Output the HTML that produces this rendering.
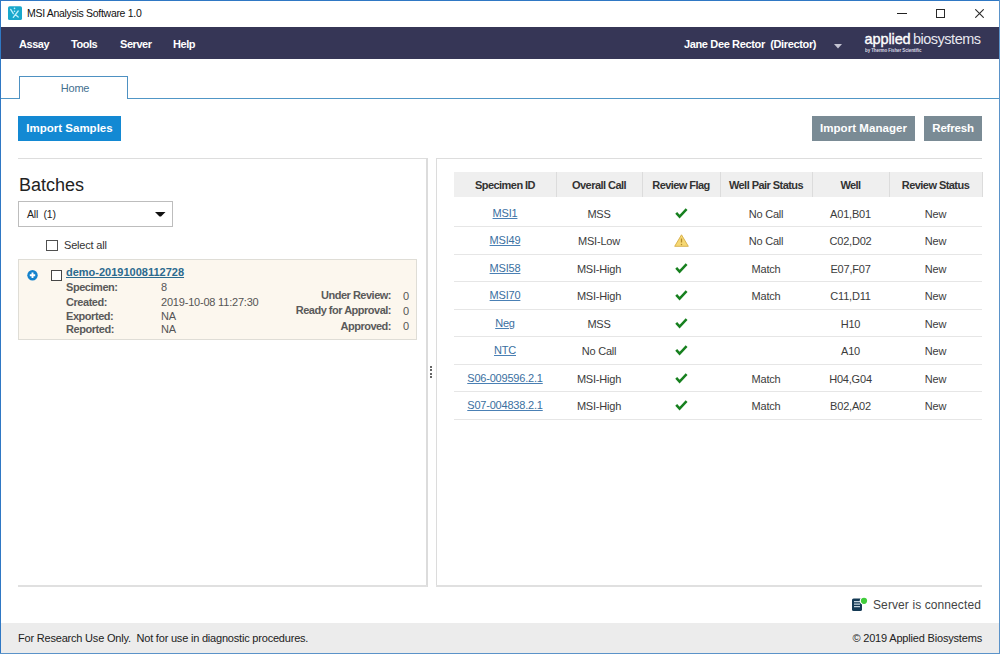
<!DOCTYPE html>
<html><head><meta charset="utf-8">
<style>
*{box-sizing:border-box;margin:0;padding:0}
html,body{width:1000px;height:654px;overflow:hidden;background:#fff;font-family:"Liberation Sans",sans-serif;color:#333}
.abs{position:absolute}
svg{display:block}
#win{position:absolute;left:0;top:0;width:1000px;height:654px;background:#fff}
.bl{position:absolute;background:#2b76c4}
#title{position:absolute;left:27px;top:7px;font-size:10.5px;color:#111;letter-spacing:-0.3px;white-space:nowrap}
#menubar{position:absolute;left:1px;top:27px;width:998px;height:32px;background:#363656}
.mi{position:absolute;top:11px;color:#fff;font-weight:bold;font-size:11px;letter-spacing:-0.45px;white-space:nowrap}
.tabline{position:absolute;left:1px;top:98px;width:998px;height:1px;background:#5096c6}
#tab{position:absolute;left:19px;top:76px;width:109px;height:23px;border:1px solid #4e91c2;border-bottom:none;background:#fff}
#tab span{position:absolute;left:3px;right:0;top:5px;text-align:center;font-size:11px;letter-spacing:-0.25px;color:#44708f}
.btn{position:absolute;top:116px;height:25px;color:#fff;font-weight:bold;font-size:11.5px;text-align:center;line-height:25px;letter-spacing:-0.2px;white-space:nowrap}
.t{position:absolute;white-space:nowrap;font-size:11px;letter-spacing:-0.2px}
.b{font-weight:bold;letter-spacing:-0.45px}
.hd{position:absolute;top:172px;height:25px;font-weight:bold;font-size:11px;letter-spacing:-0.55px;color:#333;text-align:center;line-height:26px}
.rl{position:absolute;left:454px;width:528px;height:1px;background:#e6e6e6}
.c{position:absolute;text-align:center;font-size:11px;letter-spacing:-0.2px;color:#3c3c3c;white-space:nowrap}
.lnk{color:#3a6f9f;text-decoration:underline;text-decoration-color:#4a80b5;text-underline-offset:1px}
</style></head><body>
<div id="win">
  <!-- window border -->
  <div class="bl" style="left:0;top:0;width:1000px;height:1px;background:#2f78c4"></div>
  <div class="bl" style="left:0;top:0;width:1px;height:654px;background:#2f78c4"></div>
  <div class="bl" style="left:999px;top:0;width:1px;height:654px;background:#5b93c9"></div>
  <div class="bl" style="left:0;top:653px;width:1000px;height:1px;background:#5b93c9"></div>

  <!-- title bar -->
  <svg class="abs" style="left:8px;top:6px" width="14" height="14" viewBox="0 0 14 14">
    <rect x="0" y="0.3" width="14" height="13.7" rx="1.6" fill="#18a8cc"/>
    <path d="M2.7 3.4 L5.3 7.6 M10.2 5 L5.3 11.4 M7.2 8.6 L10.2 11.1" stroke="#bff0fb" stroke-width="1.3" stroke-linecap="round" fill="none"/>
    <circle cx="6.5" cy="2.4" r="0.8" fill="#bff0fb"/><circle cx="6.5" cy="5.3" r="0.8" fill="#bff0fb"/>
  </svg>
  <div id="title">MSI Analysis Software 1.0</div>
  <!-- window controls -->
  <div class="abs" style="left:897px;top:13px;width:9.5px;height:1px;background:#222"></div>
  <div class="abs" style="left:936px;top:9px;width:9px;height:9px;border:1px solid #2a2a2a"></div>
  <svg class="abs" style="left:975px;top:9px" width="9" height="9" viewBox="0 0 9 9"><path d="M0.3 0.3 L8.7 8.7 M8.7 0.3 L0.3 8.7" stroke="#2a2a2a" stroke-width="1.1"/></svg>

  <!-- menu bar -->
  <div id="menubar"></div>
  <div class="mi" style="left:19px;top:38px">Assay</div>
  <div class="mi" style="left:71px;top:38px">Tools</div>
  <div class="mi" style="left:120px;top:38px">Server</div>
  <div class="mi" style="left:173px;top:38px">Help</div>
  <div class="mi" style="left:684px;top:38px;letter-spacing:-0.36px">Jane Dee Rector&nbsp; (Director)</div>
  <svg class="abs" style="left:834px;top:43.5px" width="8" height="5" viewBox="0 0 8 5"><path d="M0 0 L8 0 L4 4.5 Z" fill="#c4c4d2"/></svg>
  <div class="abs" style="left:864.5px;top:30.5px;color:#fff;font-size:14.5px;letter-spacing:-0.1px;white-space:nowrap;-webkit-text-stroke:0.35px #fff">applied</div>
  <div class="abs" style="left:913px;top:31px;color:#e8e8f0;font-size:14.5px;letter-spacing:-0.5px;white-space:nowrap">biosystems</div>
  <div class="abs" style="left:865px;top:48px;color:#d8d8e4;font-size:9px;font-weight:bold;white-space:nowrap;letter-spacing:-0.2px;transform:scale(0.5);transform-origin:0 0">by Thermo Fisher Scientific</div>

  <!-- tabs -->
  <div class="tabline"></div>
  <div id="tab"><span>Home</span></div>

  <!-- buttons -->
  <div class="btn" style="left:18px;width:103px;background:#1389d3;letter-spacing:0">Import Samples</div>
  <div class="btn" style="left:812px;width:103px;background:#7a8b95;letter-spacing:0.05px">Import Manager</div>
  <div class="btn" style="left:924px;width:58px;background:#7a8b95">Refresh</div>

  <!-- left panel -->
  <div class="abs" style="left:18px;top:158px;width:409px;height:1px;background:#dddddd"></div>
  <div class="abs" style="left:426px;top:158px;width:1.5px;height:429px;background:#dcdcdc"></div>
  <div class="abs" style="left:18px;top:585px;width:409px;height:2px;background:#e0e0e0"></div>
  <div class="t" style="left:19px;top:175px;font-size:18px;letter-spacing:0;color:#222">Batches</div>
  <div class="abs" style="left:18px;top:201px;width:155px;height:26px;border:1px solid #bdbdbd;background:#fff"></div>
  <div class="t" style="left:27px;top:208px;color:#222;font-size:10.5px">All&nbsp; (1)</div>
  <svg class="abs" style="left:155px;top:212px" width="11" height="5" viewBox="0 0 11 5"><path d="M0 0 L10.5 0 L6 4.6 L4.5 4.6 Z" fill="#111"/></svg>
  <div class="abs" style="left:46px;top:239.5px;width:11.8px;height:11.5px;border:1px solid #505050;background:#fff"></div>
  <div class="t" style="left:64px;top:239px;color:#333">Select all</div>

  <!-- batch card -->
  <div class="abs" style="left:18px;top:259px;width:399px;height:81px;background:#fcf7ee;border:1px solid #dfddd6"></div>
  <svg class="abs" style="left:27px;top:269.5px" width="11" height="11" viewBox="0 0 11 11"><circle cx="5.5" cy="5.3" r="5.2" fill="#1482cc"/><path d="M5.5 2.6 V8 M2.8 5.3 H8.2" stroke="#fff" stroke-width="1.9"/></svg>
  <div class="abs" style="left:51px;top:269.5px;width:11px;height:11.3px;border:1px solid #474747;background:#fff"></div>
  <div class="t b" style="left:66px;top:266px;color:#2b6a8e;text-decoration:underline;font-size:11px;letter-spacing:0">demo-20191008112728</div>
  <div class="t b" style="left:66px;top:281px;color:#5a5a5a">Specimen:</div>
  <div class="t b" style="left:66px;top:295.5px;color:#5a5a5a">Created:</div>
  <div class="t b" style="left:66px;top:309.5px;color:#5a5a5a">Exported:</div>
  <div class="t b" style="left:66px;top:323px;color:#5a5a5a">Reported:</div>
  <div class="t" style="left:161px;top:281px;color:#555">8</div>
  <div class="t" style="left:161px;top:295.5px;color:#555">2019-10-08 11:27:30</div>
  <div class="t" style="left:161px;top:309.5px;color:#555">NA</div>
  <div class="t" style="left:161px;top:323px;color:#555">NA</div>
  <div class="t b" style="right:609px;top:289px;color:#5a5a5a;letter-spacing:-0.5px;text-align:right">Under Review:</div>
  <div class="t b" style="right:609px;top:304px;color:#5a5a5a;letter-spacing:-0.5px;text-align:right">Ready for Approval:</div>
  <div class="t b" style="right:609px;top:319.5px;color:#5a5a5a;letter-spacing:-0.5px;text-align:right">Approved:</div>
  <div class="t" style="left:403px;top:290px;color:#555">0</div>
  <div class="t" style="left:403px;top:305px;color:#555">0</div>
  <div class="t" style="left:403px;top:320px;color:#555">0</div>

  <!-- splitter dots -->
  <div class="abs" style="left:430px;top:365.7px;width:2.2px;height:2.2px;border-radius:50%;background:#333"></div>
  <div class="abs" style="left:430px;top:369.2px;width:2.2px;height:2.2px;border-radius:50%;background:#333"></div>
  <div class="abs" style="left:430px;top:372.6px;width:2.2px;height:2.2px;border-radius:50%;background:#333"></div>
  <div class="abs" style="left:430px;top:376.1px;width:2.2px;height:2.2px;border-radius:50%;background:#333"></div>

  <!-- right panel -->
  <div class="abs" style="left:436px;top:158px;width:546px;height:1px;background:#dddddd"></div>
  <div class="abs" style="left:435.5px;top:158px;width:1.5px;height:429px;background:#dcdcdc"></div>
  <div class="abs" style="left:436px;top:585px;width:546px;height:2px;background:#e0e0e0"></div>

  <div id="table">
<div class="abs" style="left:454px;top:172px;width:528px;height:25px;background:#efefef"></div>
<div class="abs" style="left:556px;top:172px;width:1px;height:25px;background:#dcdcdc"></div>
<div class="hd" style="left:454px;width:102px">Specimen ID</div>
<div class="abs" style="left:642px;top:172px;width:1px;height:25px;background:#dcdcdc"></div>
<div class="hd" style="left:556px;width:86px">Overall Call</div>
<div class="abs" style="left:720px;top:172px;width:1px;height:25px;background:#dcdcdc"></div>
<div class="hd" style="left:642px;width:78px">Review Flag</div>
<div class="abs" style="left:812px;top:172px;width:1px;height:25px;background:#dcdcdc"></div>
<div class="hd" style="left:720px;width:92px">Well Pair Status</div>
<div class="abs" style="left:889px;top:172px;width:1px;height:25px;background:#dcdcdc"></div>
<div class="hd" style="left:812px;width:77px">Well</div>
<div class="abs" style="left:982px;top:172px;width:1px;height:25px;background:#dcdcdc"></div>
<div class="hd" style="left:889px;width:93px">Review Status</div>
<div class="rl" style="top:226.0px"></div>
<div class="c lnk" style="left:454px;width:102px;top:206.9px">MSI1</div>
<div class="c" style="left:556px;width:86px;top:207.8px">MSS</div>
<div class="abs" style="left:674.5px;top:207.8px;width:13px;height:11px"><svg width="13" height="11" viewBox="0 0 13 11"><path d="M1.2 4.8 L4.6 8.6 L11.6 1.2" stroke="#17801f" stroke-width="2.5" fill="none"/></svg></div>
<div class="c" style="left:720px;width:92px;top:207.8px">No Call</div>
<div class="c" style="left:812px;width:77px;top:207.8px">A01,B01</div>
<div class="c" style="left:889px;width:93px;top:207.8px">New</div>
<div class="rl" style="top:253.5px"></div>
<div class="c lnk" style="left:454px;width:102px;top:234.4px">MSI49</div>
<div class="c" style="left:556px;width:86px;top:235.2px">MSI-Low</div>
<div class="abs" style="left:673.5px;top:233.8px;width:15px;height:13px"><svg width="15" height="13" viewBox="0 0 15 13"><path d="M7.5 0.8 L14.3 12.3 L0.7 12.3 Z" fill="#f6d874" stroke="#d6ad45" stroke-width="0.9" stroke-linejoin="round"/><path d="M7.5 4.5 V8.5" stroke="#b48c2c" stroke-width="1.3"/><circle cx="7.5" cy="10.4" r="0.75" fill="#b48c2c"/></svg></div>
<div class="c" style="left:720px;width:92px;top:235.2px">No Call</div>
<div class="c" style="left:812px;width:77px;top:235.2px">C02,D02</div>
<div class="c" style="left:889px;width:93px;top:235.2px">New</div>
<div class="rl" style="top:281.0px"></div>
<div class="c lnk" style="left:454px;width:102px;top:261.9px">MSI58</div>
<div class="c" style="left:556px;width:86px;top:262.8px">MSI-High</div>
<div class="abs" style="left:674.5px;top:262.8px;width:13px;height:11px"><svg width="13" height="11" viewBox="0 0 13 11"><path d="M1.2 4.8 L4.6 8.6 L11.6 1.2" stroke="#17801f" stroke-width="2.5" fill="none"/></svg></div>
<div class="c" style="left:720px;width:92px;top:262.8px">Match</div>
<div class="c" style="left:812px;width:77px;top:262.8px">E07,F07</div>
<div class="c" style="left:889px;width:93px;top:262.8px">New</div>
<div class="rl" style="top:308.5px"></div>
<div class="c lnk" style="left:454px;width:102px;top:289.4px">MSI70</div>
<div class="c" style="left:556px;width:86px;top:290.2px">MSI-High</div>
<div class="abs" style="left:674.5px;top:290.2px;width:13px;height:11px"><svg width="13" height="11" viewBox="0 0 13 11"><path d="M1.2 4.8 L4.6 8.6 L11.6 1.2" stroke="#17801f" stroke-width="2.5" fill="none"/></svg></div>
<div class="c" style="left:720px;width:92px;top:290.2px">Match</div>
<div class="c" style="left:812px;width:77px;top:290.2px">C11,D11</div>
<div class="c" style="left:889px;width:93px;top:290.2px">New</div>
<div class="rl" style="top:336.0px"></div>
<div class="c lnk" style="left:454px;width:102px;top:316.9px">Neg</div>
<div class="c" style="left:556px;width:86px;top:317.8px">MSS</div>
<div class="abs" style="left:674.5px;top:317.8px;width:13px;height:11px"><svg width="13" height="11" viewBox="0 0 13 11"><path d="M1.2 4.8 L4.6 8.6 L11.6 1.2" stroke="#17801f" stroke-width="2.5" fill="none"/></svg></div>
<div class="c" style="left:812px;width:77px;top:317.8px">H10</div>
<div class="c" style="left:889px;width:93px;top:317.8px">New</div>
<div class="rl" style="top:363.5px"></div>
<div class="c lnk" style="left:454px;width:102px;top:344.4px">NTC</div>
<div class="c" style="left:556px;width:86px;top:345.2px">No Call</div>
<div class="abs" style="left:674.5px;top:345.2px;width:13px;height:11px"><svg width="13" height="11" viewBox="0 0 13 11"><path d="M1.2 4.8 L4.6 8.6 L11.6 1.2" stroke="#17801f" stroke-width="2.5" fill="none"/></svg></div>
<div class="c" style="left:812px;width:77px;top:345.2px">A10</div>
<div class="c" style="left:889px;width:93px;top:345.2px">New</div>
<div class="rl" style="top:391.0px"></div>
<div class="c lnk" style="left:454px;width:102px;top:371.9px">S06-009596.2.1</div>
<div class="c" style="left:556px;width:86px;top:372.8px">MSI-High</div>
<div class="abs" style="left:674.5px;top:372.8px;width:13px;height:11px"><svg width="13" height="11" viewBox="0 0 13 11"><path d="M1.2 4.8 L4.6 8.6 L11.6 1.2" stroke="#17801f" stroke-width="2.5" fill="none"/></svg></div>
<div class="c" style="left:720px;width:92px;top:372.8px">Match</div>
<div class="c" style="left:812px;width:77px;top:372.8px">H04,G04</div>
<div class="c" style="left:889px;width:93px;top:372.8px">New</div>
<div class="rl" style="top:418.5px"></div>
<div class="c lnk" style="left:454px;width:102px;top:399.4px">S07-004838.2.1</div>
<div class="c" style="left:556px;width:86px;top:400.2px">MSI-High</div>
<div class="abs" style="left:674.5px;top:400.2px;width:13px;height:11px"><svg width="13" height="11" viewBox="0 0 13 11"><path d="M1.2 4.8 L4.6 8.6 L11.6 1.2" stroke="#17801f" stroke-width="2.5" fill="none"/></svg></div>
<div class="c" style="left:720px;width:92px;top:400.2px">Match</div>
<div class="c" style="left:812px;width:77px;top:400.2px">B02,A02</div>
<div class="c" style="left:889px;width:93px;top:400.2px">New</div>
</div><!--/table-->

  <!-- status -->
  <svg class="abs" style="left:850px;top:596px" width="18" height="16" viewBox="0 0 18 16">
    <rect x="2" y="2.5" width="10" height="12.5" rx="1.6" fill="#143a55"/>
    <path d="M4 5.6 H10 M4 8.1 H10 M4 10.6 H10" stroke="#c3d3de" stroke-width="1.2"/>
    <circle cx="14" cy="4.8" r="4.3" fill="#fff"/>
    <circle cx="14" cy="4.8" r="3.1" fill="#3fcc3a"/>
  </svg>
  <div class="t" style="left:873px;top:598px;font-size:12px;color:#444;letter-spacing:0.1px">Server is connected</div>

  <!-- footer -->
  <div class="abs" style="left:1px;top:623px;width:998px;height:30px;background:#ececec"></div>
  <div class="t" style="left:18px;top:632px;color:#222;letter-spacing:-0.2px">For Research Use Only.&nbsp; Not for use in diagnostic procedures.</div>
  <div class="t" style="right:18px;top:632px;color:#222;letter-spacing:-0.18px">© 2019 Applied Biosystems</div>
</div>
</body></html>
